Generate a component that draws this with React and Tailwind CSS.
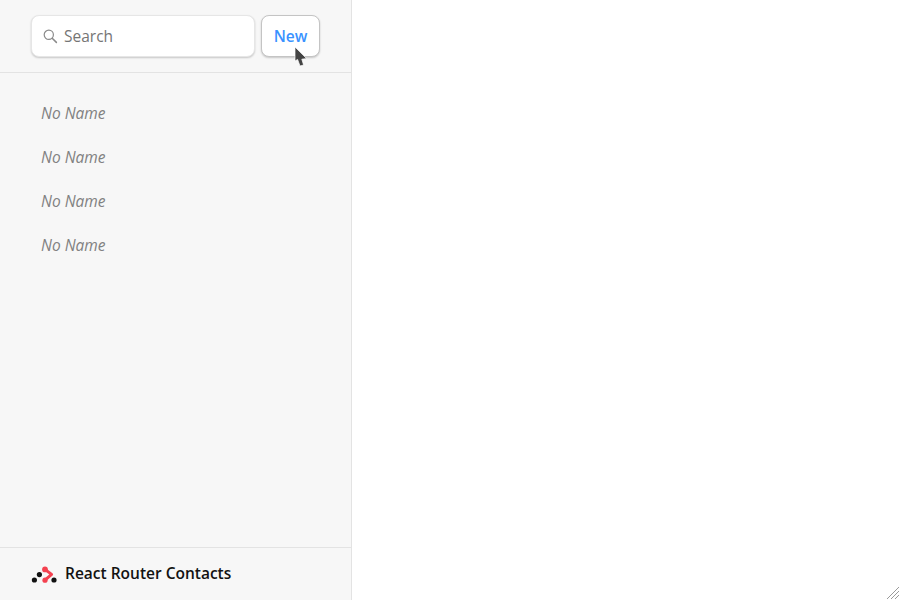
import React from 'react';

const contacts = [1, 2, 3, 4];

function SearchIcon() {
  return (
    <svg width="15" height="15" viewBox="0 0 15 15" fill="none" stroke="#8a8a8a" strokeWidth="1.2" className="shrink-0">
      <circle cx="5.8" cy="5.8" r="4.6" />
      <path d="M9.2 9.2L13.4 13.4" strokeLinecap="round" strokeWidth="1.5" />
    </svg>
  );
}

function Logo() {
  return (
    <svg width="26" height="17" viewBox="0 0 26 17" className="shrink-0">
      <path d="M14 3.4L20.6 8.4L14 14.2" fill="none" stroke="#f44250" strokeWidth="3" strokeLinejoin="round" strokeLinecap="round" />
      <circle cx="14" cy="3.4" r="2.9" fill="#f44250" />
      <circle cx="14" cy="14.2" r="2.6" fill="#f44250" />
      <circle cx="8.4" cy="8.6" r="2.6" fill="#121212" />
      <circle cx="3.4" cy="14" r="2.6" fill="#121212" />
      <circle cx="23" cy="14" r="2.6" fill="#121212" />
    </svg>
  );
}

function Cursor() {
  return (
    <svg width="13" height="21" viewBox="0 0 13 21" className="absolute left-[32px] top-[30px]">
      <path d="M1 1L1 15L3.6 13.4L6 20L9.6 19L7.8 13.2L12.6 12.6Z" fill="#444444" stroke="#ffffff" strokeWidth="0.7" strokeLinejoin="round" />
    </svg>
  );
}

export default function App() {
  return (
    <div className="flex h-screen bg-white font-['Open_Sans','Liberation_Sans',sans-serif] text-[15.5px]">
      <aside className="flex w-[352px] flex-col border-r border-[#e3e3e3] bg-[#f7f7f7]">
        <div className="flex h-[73px] items-start gap-[6px] border-b border-[#e3e3e3] pl-[31px] pt-[15px]">
          <div className="flex h-[42px] w-[224px] items-center gap-[6px] rounded-lg border border-[#e6e6e6] bg-white pl-[11px] shadow-[0_1px_2px_rgba(0,0,0,0.2)]">
            <SearchIcon />
            <span className="mt-[2px] text-[#757575]">Search</span>
          </div>
          <div className="relative flex h-[42px] w-[59px] items-center justify-center rounded-lg border border-[#c4c4c4] bg-white shadow-[0_1px_2px_rgba(0,0,0,0.2)]">
            <span className="mt-[2px] font-semibold text-[#3992ff]">New</span>
            <Cursor />
          </div>
        </div>
        <nav className="flex-1 pl-[41px] pt-[19px]">
          {contacts.map((id) => (
            <div key={id} className="flex h-[44px] items-center italic text-[#818181]">
              No Name
            </div>
          ))}
        </nav>
        <div className="flex h-[53px] items-center gap-[8px] border-t border-[#e3e3e3] pl-[31px]">
          <Logo />
          <span className="font-semibold text-[#121212]">React Router Contacts</span>
        </div>
      </aside>
      <main className="relative flex-1">
        <svg width="14" height="14" viewBox="0 0 14 14" className="absolute bottom-0 right-0">
          <path d="M1 13L13 1M5 13L13 5M9 13L13 9" stroke="#9a9a9a" strokeWidth="1" fill="none" />
        </svg>
      </main>
    </div>
  );
}
